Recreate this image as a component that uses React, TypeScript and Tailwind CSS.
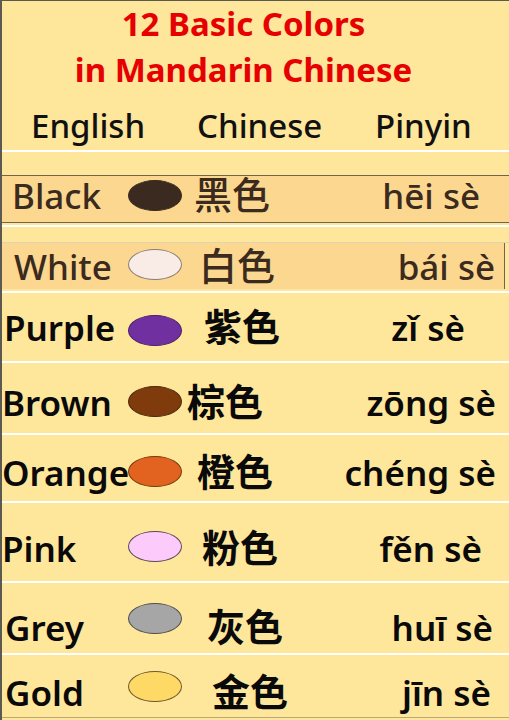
import React from "react";

type Row = {
  en: string;
  zh: string;
  py: string;
  box: string;
  enPl: string;
  zhMl: string;
  pyPr: string;
  fill: string;
  shift: string;
  text: string;
};

const rows: Row[] = [
  {
    en: "Purple",
    zh: "紫色",
    py: "zǐ sè",
    box: "h-[68px] pt-[15px]",
    enPl: "pl-[2px]",
    zhMl: "ml-[22px]",
    pyPr: "pr-[44px]",
    fill: "bg-[#7030a0] border-[#4a2070]",
    shift: "translate-y-[5px]",
    text: "text-[#0a0a0a] font-semibold",
  },
  {
    en: "Brown",
    zh: "棕色",
    py: "zōng sè",
    box: "h-[70px] pt-[20px]",
    enPl: "pl-0",
    zhMl: "ml-[5px]",
    pyPr: "pr-[13px]",
    fill: "bg-[#7f3b0c] border-[#4a2a10]",
    shift: "translate-y-[1px]",
    text: "text-[#0a0a0a] font-semibold",
  },
  {
    en: "Orange",
    zh: "橙色",
    py: "chéng sè",
    box: "h-[66px] pt-[18px]",
    enPl: "pl-0",
    zhMl: "ml-[15px]",
    pyPr: "pr-[13px]",
    fill: "bg-[#e2621f] border-[#7a3a10]",
    shift: "translate-y-[1px]",
    text: "text-[#0a0a0a] font-semibold",
  },
  {
    en: "Pink",
    zh: "粉色",
    py: "fěn sè",
    box: "h-[78px] pt-[26px]",
    enPl: "pl-0",
    zhMl: "ml-[20px]",
    pyPr: "pr-[27px]",
    fill: "bg-[#fccbfc] border-[#5a4a5a]",
    shift: "translate-y-0",
    text: "text-[#0a0a0a] font-semibold",
  },
  {
    en: "Grey",
    zh: "灰色",
    py: "huī sè",
    box: "h-[70px] pt-[25px]",
    enPl: "pl-[3px]",
    zhMl: "ml-[25px]",
    pyPr: "pr-[16px]",
    fill: "bg-[#a6a6a6] border-[#505050]",
    shift: "-translate-y-[7px]",
    text: "text-[#0a0a0a] font-semibold",
  },
  {
    en: "Gold",
    zh: "金色",
    py: "jīn sè",
    box: "h-[63px] pt-[18px] border-b border-[#b8a878]",
    enPl: "pl-[3px]",
    zhMl: "ml-[30px]",
    pyPr: "pr-[18px]",
    fill: "bg-[#ffd966] border-[#6a5a30]",
    shift: "-translate-y-[4px]",
    text: "text-[#0a0a0a] font-semibold",
  },
];

function RowContent({ r }: { r: Row }) {
  return (
    <>
      <div className={`w-[126px] shrink-0 ${r.enPl}`}>
        <span className={`text-[35px] leading-[40px] whitespace-nowrap ${r.text}`}>{r.en}</span>
      </div>
      <div className={`w-[54px] h-[31px] shrink-0 rounded-[50%] border ${r.fill} ${r.shift}`} />
      <span
        className={`${r.zhMl} text-[38px] leading-[34px] font-bold whitespace-nowrap ${r.text}`}
        style={{ fontFamily: '"Noto Sans CJK SC", "Noto Sans", sans-serif' }}
      >
        {r.zh}
      </span>
      <div className="flex-1" />
      <span className={`${r.pyPr} text-[35px] leading-[40px] whitespace-nowrap ${r.text}`}>{r.py}</span>
    </>
  );
}

export default function App() {
  return (
    <div
      className="w-[509px] h-[720px] overflow-hidden bg-[#fee69b] border-l-2 border-t border-[#5c5a50] flex flex-col"
      style={{ fontFamily: '"Noto Sans", "Noto Sans CJK SC", sans-serif' }}
    >
      {/* Title */}
      <div className="pr-[24px] text-center text-[33px] leading-[46px] font-bold text-[#e60000]">
        <div>12 Basic Colors</div>
        <div>in Mandarin Chinese</div>
      </div>

      {/* Header */}
      <div className="h-[57px] pt-[10px] flex text-[33px] leading-[46px] font-medium text-[#111]">
        <div className="w-[165px] shrink-0 pl-[29px]">English</div>
        <div className="w-[175px] shrink-0 pl-[30px]">Chinese</div>
        <div className="pl-[33px]">Pinyin</div>
      </div>

      <div className="h-[2px] bg-white shrink-0" />
      <div className="h-[23px] shrink-0" />

      {/* Black row */}
      <div className="h-[48px] shrink-0 border-y border-[#6e6450] bg-[#fbd78f] flex items-baseline">
        <RowContent
          r={{
            en: "Black",
            zh: "黑色",
            py: "hēi sè",
            box: "",
            enPl: "pl-[10px]",
            zhMl: "ml-[12px]",
            pyPr: "pr-[29px]",
            fill: "bg-[#3b2a1f] border-[#3b2a1f]",
            shift: "translate-y-[2px]",
            text: "text-[#3b2a1e] font-medium",
          }}
        />
      </div>

      <div className="h-[2px] shrink-0" />
      <div className="h-[2px] bg-white shrink-0" />
      <div className="h-[15px] shrink-0" />
      <div className="h-px bg-[#dcd4b4] shrink-0" />

      {/* White row */}
      <div className="h-[46px] w-[503px] shrink-0 pt-[4px] border-r border-[#6e6450] bg-[#fbd78f] flex items-baseline">
        <RowContent
          r={{
            en: "White",
            zh: "白色",
            py: "bái sè",
            box: "",
            enPl: "pl-[12px]",
            zhMl: "ml-[17px]",
            pyPr: "pr-[9px]",
            fill: "bg-[#f9ebe6] border-[#8a7f78]",
            shift: "translate-y-0",
            text: "text-[#3b2a1e] font-medium",
          }}
        />
      </div>

      <div className="h-[2px] shrink-0" />
      <div className="h-[2px] bg-white shrink-0" />

      {rows.map((r, i) => (
        <React.Fragment key={r.en}>
          {i > 0 && <div className="h-[2px] bg-white shrink-0" />}
          <div className={`${r.box} shrink-0 flex items-baseline`}>
            <RowContent r={r} />
          </div>
        </React.Fragment>
      ))}
    </div>
  );
}
